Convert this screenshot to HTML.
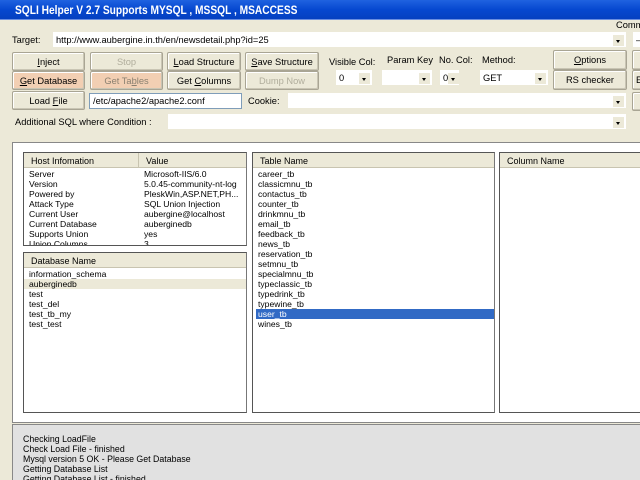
<!DOCTYPE html>
<html style="width:640px;height:480px;overflow:hidden"><head><meta charset="utf-8"><style>
*{box-sizing:border-box;margin:0;padding:0}
body{width:640px;height:480px;overflow:hidden;background:#ece9d8;font-family:"Liberation Sans",sans-serif;font-size:9.3px;color:#000;position:relative}
.a{position:absolute;white-space:nowrap}
.title{left:0;top:0;width:640px;height:20px;background:linear-gradient(#1f62e0,#0648d0 50%,#0540c0);color:#fff;font-weight:bold;font-size:12px;padding:3px 0 0 15px;border-bottom:1px solid #6a8ee0}
.title span{display:inline-block;transform:scaleX(0.85);transform-origin:0 0}
.in{background:#fff;border:1px solid #ece9d8;padding:3px 3px}
.btn{border:1px solid #a9a594;background:#ece9d8;text-align:center;padding-top:4px;border-radius:2px;box-shadow:inset -1px -1px 0 #c9c5b4,inset 1px 1px 0 #fff}
.or{background:#f2cfb3}
.dis{color:#b0ad9c}
.arr{position:absolute;right:2px;top:3px;width:11px;height:11px;background:#ece9d8}
.arr:after{content:"";position:absolute;left:3px;top:5px;border-left:2.5px solid transparent;border-right:2.5px solid transparent;border-top:3px solid #000}
.lv{background:#fff;border:1px solid #555;border-right-color:#777;font-size:8.6px;overflow:hidden}
.hd{height:15px;background:#ece9d8;border-bottom:1px solid #c8c4b0;padding:3px 0 0 7px;position:relative;font-size:9px}
.row{height:10px;line-height:10px;padding-left:5px}
u{text-decoration:underline}
</style></head><body>
<div class="a title"><span>SQLI Helper V 2.7 Supports MYSQL , MSSQL , MSACCESS</span></div>
<div class="a" style="left:616px;top:20px">Comm</div>
<div class="a" style="left:12px;top:35px">Target:</div>
<div class="a in" style="left:52px;top:31px;width:575px;height:17px">http://www.aubergine.in.th/en/newsdetail.php?id=25<span class="arr"></span></div>
<div class="a in" style="left:632px;top:31px;width:20px;height:17px">—</div>

<div class="a btn" style="left:12px;top:52px;width:73px;height:19px"><u>I</u>nject</div>
<div class="a btn dis" style="left:90px;top:52px;width:73px;height:19px">Stop</div>
<div class="a btn" style="left:167px;top:52px;width:74px;height:19px"><u>L</u>oad Structure</div>
<div class="a btn" style="left:245px;top:52px;width:74px;height:19px"><u>S</u>ave Structure</div>
<div class="a btn or" style="left:12px;top:71px;width:73px;height:19px"><u>G</u>et Database</div>
<div class="a btn or dis" style="left:90px;top:71px;width:73px;height:19px;color:#8a8070">Get Ta<u>b</u>les</div>
<div class="a btn" style="left:167px;top:71px;width:74px;height:19px">Get <u>C</u>olumns</div>
<div class="a btn dis" style="left:245px;top:71px;width:74px;height:19px">Dump Now</div>
<div class="a btn" style="left:12px;top:91px;width:73px;height:19px">Load <u>F</u>ile</div>
<div class="a" style="left:89px;top:93px;width:153px;height:16px;background:#fff;border:1px solid #7f9db9;padding:2px 3px">/etc/apache2/apache2.conf</div>
<div class="a" style="left:248px;top:96px">Cookie:</div>
<div class="a in" style="left:287px;top:92px;width:340px;height:17px"><span class="arr"></span></div>
<div class="a btn" style="left:632px;top:92px;width:20px;height:19px"></div>
<div class="a" style="left:15px;top:117px">Additional SQL where Condition :</div>
<div class="a in" style="left:167px;top:113px;width:460px;height:17px"><span class="arr"></span></div>

<div class="a" style="left:329px;top:57px">Visible Col:</div>
<div class="a" style="left:387px;top:55px">Param Key</div>
<div class="a" style="left:439px;top:55px">No. Col:</div>
<div class="a" style="left:482px;top:55px">Method:</div>
<div class="a in" style="left:335px;top:69px;width:38px;height:17px">0<span class="arr"></span></div>
<div class="a in" style="left:381px;top:69px;width:52px;height:17px"><span class="arr"></span></div>
<div class="a in" style="left:439px;top:69px;width:21px;height:17px">0<span class="arr" style="right:0"></span></div>
<div class="a in" style="left:479px;top:69px;width:70px;height:17px">GET<span class="arr"></span></div>
<div class="a btn" style="left:553px;top:50px;width:74px;height:20px"><u>O</u>ptions</div>
<div class="a btn" style="left:553px;top:70px;width:74px;height:20px">RS checker</div>
<div class="a btn" style="left:632px;top:50px;width:20px;height:20px"></div>
<div class="a btn" style="left:632px;top:70px;width:20px;height:20px;text-align:left;padding-left:3px">E</div>

<div class="a" style="left:12px;top:142px;width:640px;height:281px;background:#fff;border:1px solid #888;border-right:none"></div>
<div class="a lv" style="left:23px;top:152px;width:224px;height:94px">
<div class="hd">Host Infomation<span style="position:absolute;left:114px;top:0;height:14px;border-left:1px solid #c8c4b0;padding:3px 0 0 7px">Value</span></div>
<div style="position:relative;padding-top:1px">
<div class="row">Server</div><div class="row">Version</div><div class="row">Powered by</div><div class="row">Attack Type</div><div class="row">Current User</div><div class="row">Current Database</div><div class="row">Supports Union</div><div class="row">Union Columns</div>
<div style="position:absolute;left:115px;top:1px">
<div class="row">Microsoft-IIS/6.0</div><div class="row">5.0.45-community-nt-log</div><div class="row">PleskWin,ASP.NET,PH...</div><div class="row">SQL Union Injection</div><div class="row">aubergine@localhost</div><div class="row">auberginedb</div><div class="row">yes</div><div class="row">3</div></div></div>
</div>
<div class="a lv" style="left:23px;top:252px;width:224px;height:161px">
<div class="hd">Database Name</div>
<div style="padding-top:1px"><div class="row">information_schema</div><div class="row" style="background:#ece9d8">auberginedb</div><div class="row">test</div><div class="row">test_del</div><div class="row">test_tb_my</div><div class="row">test_test</div></div>
</div>
<div class="a lv" style="left:252px;top:152px;width:243px;height:261px">
<div class="hd">Table Name</div>
<div style="padding-top:1px"><div class="row">career_tb</div><div class="row">classicmnu_tb</div><div class="row">contactus_tb</div><div class="row">counter_tb</div><div class="row">drinkmnu_tb</div><div class="row">email_tb</div><div class="row">feedback_tb</div><div class="row">news_tb</div><div class="row">reservation_tb</div><div class="row">setmnu_tb</div><div class="row">specialmnu_tb</div><div class="row">typeclassic_tb</div><div class="row">typedrink_tb</div><div class="row">typewine_tb</div><div class="row" style="background:#316ac5;color:#fff;margin-left:3px;padding-left:2px">user_tb</div><div class="row">wines_tb</div></div>
</div>
<div class="a lv" style="left:499px;top:152px;width:150px;height:261px">
<div class="hd">Column Name</div>
</div>

<div class="a" style="left:12px;top:424px;width:640px;height:56px;overflow:hidden;background:#e1e1e1;border:1px solid #888;border-right:none;border-bottom:none;padding:9px 0 0 10px;line-height:10px;font-size:8.8px">
Checking LoadFile<br>Check Load File - finished<br>Mysql version 5 OK - Please Get Database<br>Getting Database List<br>Getting Database List - finished
</div>
</body></html>
